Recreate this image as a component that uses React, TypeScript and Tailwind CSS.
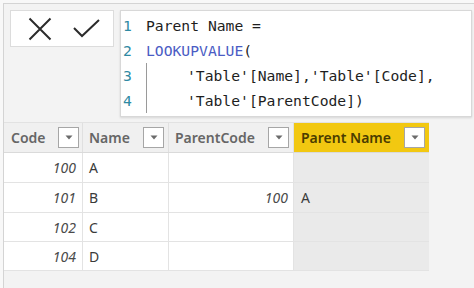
import React from "react";

const FilterBtn = () => (
  <div className="w-[21px] h-[21px] bg-white border border-[#a6a6a6] flex items-center justify-center shrink-0">
    <svg width="8" height="5" viewBox="0 0 8 5">
      <path d="M0.5 0.5 L7.5 0.5 L4 4.5 Z" fill="#6b6b6b" />
    </svg>
  </div>
);

const rows = [
  { code: "100", name: "A", parent: "", pname: "", h: "h-[30px]" },
  { code: "101", name: "B", parent: "100", pname: "A", h: "h-[30px]" },
  { code: "102", name: "C", parent: "", pname: "", h: "h-[29px]" },
  { code: "104", name: "D", parent: "", pname: "", h: "h-[29px]" },
];

export default function App() {
  return (
    <div className="w-[474px] h-[288px] bg-[#f8f8f8] pt-[3px] pl-[3px] overflow-hidden" style={{ fontFamily: '"Noto Sans", "Open Sans", sans-serif' }}>
      <div className="h-full bg-[#f3f3f3] border-t border-l border-[#d4d4d4]">
        {/* top row */}
        <div className="flex pt-[6px] pl-[6px] gap-[6px]">
          <div className="w-[104px] h-[37px] bg-white border border-[#dcdcdc] flex items-center">
            <svg width="24" height="24" viewBox="0 0 24 24" className="ml-[17px]">
              <path d="M1.5 1.5 L22.5 22.5 M22.5 1.5 L1.5 22.5" stroke="#2b2b2b" strokeWidth="2" fill="none" />
            </svg>
            <svg width="28" height="20" viewBox="0 0 28 20" className="ml-[21px]">
              <path d="M1 9 L9 17 L26 1" stroke="#2b2b2b" strokeWidth="2" fill="none" />
            </svg>
          </div>
          <div className="w-[352px] h-[107px] bg-white border border-[#d8d8d8] shadow-[0_1px_2px_rgba(0,0,0,0.12)] pt-[2px] text-[14.7px] leading-[25px]" style={{ fontFamily: '"DejaVu Sans Mono", monospace' }}>
            <div className="flex h-[25px]">
              <span className="w-[25px] pl-[2px] text-[#2f8aa3]">1</span>
              <span className="text-[#1e1e1e]">Parent Name =</span>
            </div>
            <div className="flex h-[25px]">
              <span className="w-[25px] pl-[2px] text-[#2f8aa3]">2</span>
              <span className="text-[#4a5cc4]">LOOKUPVALUE</span>
              <span className="text-[#1e1e1e]">(</span>
            </div>
            <div className="flex h-[25px]">
              <span className="w-[25px] pl-[2px] text-[#2f8aa3]">3</span>
              <span className="border-l border-[#9a9a9a] pl-[40px] text-[#1e1e1e] whitespace-pre">'Table'[Name],'Table'[Code],</span>
            </div>
            <div className="flex h-[25px]">
              <span className="w-[25px] pl-[2px] text-[#2f8aa3]">4</span>
              <span className="border-l border-[#9a9a9a] pl-[40px] text-[#1e1e1e] whitespace-pre">'Table'[ParentCode])</span>
            </div>
          </div>
        </div>

        {/* table */}
        <div className="mt-[5px] w-[425px] border-t border-[#e2e2e2]">
          <div className="flex h-[30px] border-b border-[#dadada] text-[14px] font-semibold text-[#666666]">
            <div className="w-[79px] flex items-center justify-between pl-[7px] pr-[3px] bg-[#f0f0f0] border-r border-[#e0e0e0]">
              <span>Code</span>
              <FilterBtn />
            </div>
            <div className="w-[86px] flex items-center justify-between pl-[6px] pr-[4px] bg-[#f0f0f0] border-r border-[#e0e0e0]">
              <span>Name</span>
              <FilterBtn />
            </div>
            <div className="w-[125px] flex items-center justify-between pl-[6px] pr-[4px] bg-[#f0f0f0] border-r border-[#e0e0e0]">
              <span>ParentCode</span>
              <FilterBtn />
            </div>
            <div className="w-[135px] flex items-center justify-between pl-[7px] pr-[4px] bg-[#f2c811] text-[#4a3c00]">
              <span>Parent Name</span>
              <FilterBtn />
            </div>
          </div>
          {rows.map((r) => (
            <div key={r.code} className={`flex ${r.h} border-b border-[#e3e3e3] text-[14px] text-[#3a3a3a]`}>
              <div className="w-[79px] flex items-center justify-end pr-[6px] bg-white border-r border-[#e3e3e3] italic text-[#4a4a4a]">{r.code}</div>
              <div className="w-[86px] flex items-center pl-[6px] bg-white border-r border-[#e3e3e3]">{r.name}</div>
              <div className="w-[125px] flex items-center justify-end pr-[5px] bg-white border-r border-[#e3e3e3] italic text-[#4a4a4a]">{r.parent}</div>
              <div className="w-[135px] flex items-center pl-[7px] bg-[#eaeaea]">{r.pname}</div>
            </div>
          ))}
        </div>
      </div>
    </div>
  );
}
